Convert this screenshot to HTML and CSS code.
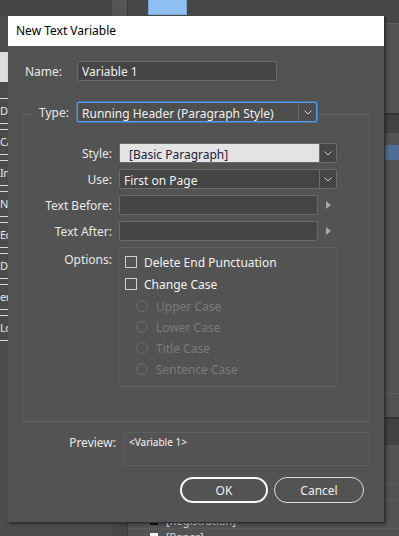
FILE: index.html
```html
<!DOCTYPE html>
<html lang="en">
<head>
  <meta charset="UTF-8" />
  <title>New Text Variable</title>
  <link rel="stylesheet" href="styles.css">
</head>
<body>

<div class="app">
  <aside class="left-panel">
    <div class="lp-top"></div>
    <div class="lp-light"></div>
    <ul class="lp-list">
      <li>D</li>
      <li>Ca</li>
      <li>In</li>
      <li>Ne</li>
      <li>Ed</li>
      <li>De</li>
      <li>er</li>
      <li>Lo</li>
    </ul>
  </aside>
  <div class="gutter"></div>
  <section class="swatches">
    <div class="sw-top"><span class="thumb"></span></div>
    <div class="sw-space h89"></div>
    <div class="sw-band"></div>
    <div class="sw-space h12"></div>
    <div class="sw-selected"></div>
    <div class="sw-space h234 line"></div>
    <div class="sw-space h23"></div>
    <div class="sw-band tall"></div>
    <div class="sw-space h40 line"></div>
    <div class="sw-space h16 line"></div>
    <div class="sw-space h12"></div>
    <div class="sw-row"><span class="chip black"></span>[Registration]</div>
    <div class="sw-row"><span class="chip white"></span>[Paper]</div>
  </section>
</div>

<div class="dialog">
  <div class="dialog-title">New Text Variable</div>
  <div class="dialog-body">
    <div class="name-row">
      <label class="name-label" for="var-name">Name:</label>
      <input id="var-name" class="field name-field" type="text" value="Variable 1">
    </div>

    <fieldset class="group">
      <legend class="type-legend">
        <span class="type-label">Type:</span>
        <span class="select type-select">
          <span class="select-text">Running Header (Paragraph Style)</span>
          <span class="select-btn"><svg width="8" height="5" viewBox="0 0 8 5"><polyline points="0.5,0.5 4,4 7.5,0.5" fill="none" stroke="#cfcfcf" stroke-width="1"/></svg></span>
        </span>
      </legend>

      <div class="vars">
        <span class="vlabel">Style:</span>
        <span class="select style-select">
          <span class="select-text">[Basic Paragraph]</span>
          <span class="select-btn"><svg width="8" height="5" viewBox="0 0 8 5"><polyline points="0.5,0.5 4,4 7.5,0.5" fill="none" stroke="#cfcfcf" stroke-width="1"/></svg></span>
        </span>

        <span class="vlabel">Use:</span>
        <span class="select use-select">
          <span class="select-text">First on Page</span>
          <span class="select-btn"><svg width="8" height="5" viewBox="0 0 8 5"><polyline points="0.5,0.5 4,4 7.5,0.5" fill="none" stroke="#cfcfcf" stroke-width="1"/></svg></span>
        </span>

        <span class="vlabel">Text Before:</span>
        <span class="with-arrow">
          <span class="field text-field"></span>
          <span class="tri"></span>
        </span>

        <span class="vlabel">Text After:</span>
        <span class="with-arrow">
          <span class="field text-field"></span>
          <span class="tri"></span>
        </span>

        <span class="vlabel options-label">Options:</span>
        <div class="options">
          <div class="opt check"><span class="box"></span>Delete End Punctuation</div>
          <div class="opt check"><span class="box"></span>Change Case</div>
          <div class="opt radio"><span class="dot"></span>Upper Case</div>
          <div class="opt radio"><span class="dot"></span>Lower Case</div>
          <div class="opt radio"><span class="dot"></span>Title Case</div>
          <div class="opt radio"><span class="dot"></span>Sentence Case</div>
        </div>
      </div>
    </fieldset>

    <div class="preview-row">
      <span class="preview-label">Preview:</span>
      <div class="preview-box">&lt;Variable 1&gt;</div>
    </div>

    <div class="buttons">
      <button class="btn primary">OK</button>
      <button class="btn">Cancel</button>
    </div>
  </div>
</div>

</body>
</html>
```

FILE: styles.css
```css
* {
  box-sizing: border-box;
}
body {
  margin: 0;
  font-family: "Noto Sans", "Open Sans", sans-serif;
  font-size: 12px;
  color: #e8e8e8;
  background: #4b4b4b;
  overflow: hidden;
}

/* background application */
.app {
  display: grid;
  grid-template-columns: 112px 16px 1fr;
  height: 536px;
}
.left-panel {
  background: #4c4c4c;
  overflow: hidden;
}
.lp-top {
  height: 52px;
  background: linear-gradient(#454545 0 16px, #4c4c4c 16px);
}
.lp-light {
  height: 30px;
  background: #dedede;
}
.lp-list {
  list-style: none;
  margin: 16px 0 0;
  padding: 0;
}
.lp-list li {
  height: 26px;
  margin-bottom: 5px;
  line-height: 24px;
  font-size: 11px;
  letter-spacing: -0.5px;
  color: #e6e6e6;
  border-top: 1px solid #d8d8d8;
  border-bottom: 1px solid #d8d8d8;
}
.gutter {
  background: linear-gradient(#555 0 16px, #474747 16px);
  border-right: 1px solid #3a3a3a;
}
.swatches {
  background: #535353;
  color: #d6d6d6;
}
.sw-top {
  height: 24px;
  background: #474747;
  border-bottom: 1px solid #5c5c5c;
  padding-left: 20px;
}
.thumb {
  display: block;
  width: 39px;
  height: 15px;
  background: #8fbff0;
  border: 1px solid #7aa8d8;
  border-top: 0;
}
.sw-space.h89 { height: 89px; }
.sw-space.h12 { height: 12px; }
.sw-space.h234 { height: 234px; }
.sw-space.h23 { height: 23px; }
.sw-space.h40 { height: 40px; }
.sw-space.h16 { height: 16px; }
.sw-space.line {
  border-bottom: 1px solid #5e5e5e;
}
.sw-band {
  height: 20px;
  background: #424242;
  border-top: 2px solid #363636;
}
.sw-band.tall {
  height: 28px;
}
.sw-selected {
  height: 15px;
  background: #4d6d93;
}
.sw-row {
  display: flex;
  align-items: center;
  height: 16px;
  padding-left: 22px;
  gap: 8px;
  font-size: 11px;
  border-bottom: 1px solid #5a5a5a;
}
.chip {
  width: 8px;
  height: 8px;
}
.chip.black { background: #111; }
.chip.white { background: #f2f2f2; }

/* dialog */
.dialog {
  position: absolute;
  left: 8px;
  top: 16px;
  width: 376px;
  height: 506px;
  background: #535353;
  box-shadow: 1px 1px 0 #2f2f2f, 2px 2px 3px rgba(0, 0, 0, 0.45);
}
.dialog-title {
  height: 30px;
  padding-left: 8px;
  line-height: 30px;
  background: #fff;
  color: #000;
}
.dialog-body {
  padding: 15px 15px 0;
}
.name-row {
  display: flex;
  align-items: center;
  height: 20px;
}
.name-label {
  width: 54px;
  padding-left: 2px;
}
.field {
  display: block;
  height: 20px;
  background: #454545;
  border: 1px solid #6c6c6c;
  border-radius: 2px;
  color: #f0f0f0;
  font: inherit;
}
.name-field {
  width: 200px;
  padding: 1px 4px 0;
  outline: none;
}

.group {
  margin: 21px 0 0;
  padding: 17px 0 34px;
  width: 346px;
  border: 1px solid #5f5f5f;
}
.type-legend {
  display: flex;
  align-items: center;
  margin-left: 9px;
  padding: 0 0 4px 6px;
}
.type-label {
  width: 38px;
  padding-top: 1px;
}
.select {
  display: flex;
  height: 20px;
  border: 1px solid #6c6c6c;
  border-radius: 2px;
  background: #454545;
  color: #f0f0f0;
}
.select-text {
  flex: 1;
  padding-left: 4px;
  line-height: 19px;
  padding-top: 1px;
  white-space: nowrap;
  overflow: hidden;
}
.select-btn {
  display: flex;
  align-items: center;
  justify-content: center;
  width: 17px;
  border-left: 1px solid #6c6c6c;
}
.type-select {
  width: 240px;
  background: #4e4e4e;
  border-color: #4c9ce8;
  box-shadow: 0 0 0 0.5px #4c9ce8;
}
.type-select .select-btn {
  width: 18px;
  border-left-color: #6a6a6a;
}
.style-select {
  width: 218px;
}
.style-select .select-text {
  background: #e3e3e3;
  color: #1d1d3a;
  padding-left: 9px;
}
.use-select {
  width: 218px;
}

.vars {
  display: grid;
  grid-template-columns: 88px auto;
  grid-auto-rows: auto;
  column-gap: 7px;
  row-gap: 6px;
  justify-content: start;
}
.vlabel {
  height: 20px;
  text-align: right;
  line-height: 20px;
  padding-top: 1px;
}
.with-arrow {
  display: flex;
  align-items: center;
}
.text-field {
  width: 199px;
}
.tri {
  margin-left: 8px;
  border-left: 5px solid #a8a8a8;
  border-top: 4px solid transparent;
  border-bottom: 4px solid transparent;
}
.options-label {
  line-height: 12px;
  padding-top: 7px;
}
.options {
  width: 218px;
  height: 140px;
  border: 1px solid #5f5f5f;
  padding: 8px 0 0 5px;
}
.opt {
  display: flex;
  align-items: center;
  height: 12px;
  white-space: nowrap;
}
.opt.check {
  margin-bottom: 10px;
  color: #f2f2f2;
}
.opt.radio {
  margin-bottom: 9px;
  padding-left: 11px;
  color: #7b7b7b;
}
.box {
  width: 12px;
  height: 12px;
  border: 1px solid #cfcfcf;
  margin-right: 7px;
}
.dot {
  width: 12px;
  height: 12px;
  border: 1px solid #6e6e6e;
  border-radius: 50%;
  margin-right: 8px;
}

.preview-row {
  display: flex;
  align-items: flex-start;
  margin-top: 10px;
}
.preview-label {
  width: 101px;
  padding-right: 8px;
  text-align: right;
  line-height: 20px;
  margin-top: 1px;
}
.preview-box {
  width: 245px;
  height: 34px;
  border: 1px solid #5f5f5f;
  padding: 2px 4px;
  font-size: 10px;
  color: #f4f4f4;
}

.buttons {
  display: flex;
  justify-content: flex-end;
  gap: 6px;
  margin: 11px 5px 0 0;
}
.btn {
  width: 90px;
  height: 26px;
  border: 1px solid #dcdcdc;
  border-radius: 13px;
  background: transparent;
  color: #f0f0f0;
  font: inherit;
}
.btn.primary {
  width: 88px;
  border: 2px solid #fafafa;
}
```
